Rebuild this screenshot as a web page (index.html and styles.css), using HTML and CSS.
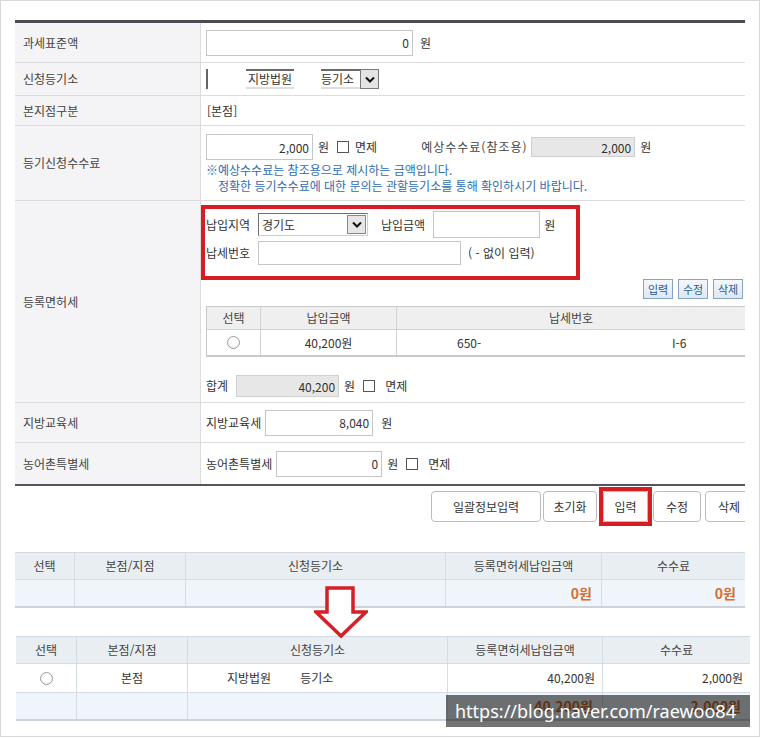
FILE: index.html
```html
<!DOCTYPE html>
<html lang="ko">
<head>
<meta charset="utf-8">
<title>등기신청 정보입력</title>
<link rel="stylesheet" href="styles.css">
</head>
<body>
<div class="frame">
  <div class="form">
    <div class="row r1">
      <div class="lbl">과세표준액</div>
      <div class="val">
        <input class="field w207" value="0" readonly><span class="ml7">원</span>
      </div>
    </div>
    <div class="row r2">
      <div class="lbl">신청등기소</div>
      <div class="val">
        <span class="bar"></span>
        <span class="seg seg1">지방법원</span>
        <span class="seg seg2">등기소</span>
        <span class="drop"><svg width="10" height="7" viewBox="0 0 10 7"><path d="M1 1.5 L5 5.5 L9 1.5" fill="none" stroke="#111" stroke-width="2"/></svg></span>
      </div>
    </div>
    <div class="row r3">
      <div class="lbl">본지점구분</div>
      <div class="val"><span class="branch">[본점]</span></div>
    </div>
    <div class="row r4">
      <div class="lbl">등기신청수수료</div>
      <div class="val col p8">
        <div class="line h26">
          <input class="field w107" value="2,000" readonly><span class="ml5">원</span><span class="chk ml8"></span><span class="ml6">면제</span><span class="est">예상수수료(참조용)</span><input class="field gray w104 h20" value="2,000" readonly><span class="ml5">원</span>
        </div>
        <p class="note">※예상수수료는 참조용으로 제시하는 금액입니다.<span class="ind">정확한 등기수수료에 대한 문의는 관할등기소를 통해 확인하시기 바랍니다.</span></p>
      </div>
    </div>
    <div class="row r5">
      <div class="lbl">등록면허세</div>
      <div class="val col p4">
        <div class="redbox">
          <div class="line h31">
            <span class="w48">납입지역</span>
            <span class="sel ml4"><span class="seltxt">경기도</span><span class="sarr"><svg width="10" height="7" viewBox="0 0 10 7"><path d="M1 1.5 L5 5.5 L9 1.5" fill="none" stroke="#111" stroke-width="2"/></svg></span></span>
            <span class="ml13">납입금액</span>
            <input class="field w107 h27 ml8" value="" readonly><span class="ml4">원</span>
          </div>
          <div class="line h26">
            <span class="w48">납세번호</span>
            <input class="field w203 h24 ml4" value="" readonly><span class="ml7">( - 없이 입력)</span>
          </div>
        </div>
        <div class="sbtns">
          <button class="sbtn">입력</button><button class="sbtn">수정</button><button class="sbtn">삭제</button>
        </div>
        <div class="ptable">
          <div class="ph">선택</div><div class="ph">납입금액</div><div class="ph">납세번호</div>
          <div class="pc"><span class="radio"></span></div><div class="pc">40,200원</div><div class="pc left"><span class="nb1">650-</span><span>I-6</span></div>
        </div>
        <div class="line h22 sumline">
          <span>합계</span><input class="field gray w103 h22 ml8" value="40,200" readonly><span class="ml5">원</span><span class="chk ml8"></span><span class="ml10">면제</span>
        </div>
      </div>
    </div>
    <div class="row r6">
      <div class="lbl">지방교육세</div>
      <div class="val">
        <span>지방교육세</span><input class="field w108 ml4" value="8,040" readonly><span class="ml8">원</span>
      </div>
    </div>
    <div class="row r7">
      <div class="lbl">농어촌특별세</div>
      <div class="val">
        <span>농어촌특별세</span><input class="field w106 ml4" value="0" readonly><span class="ml5">원</span><span class="chk ml8"></span><span class="ml10">면제</span>
      </div>
    </div>
  </div>

  <div class="actions">
    <button class="btn w110">일괄정보입력</button>
    <button class="btn w54 ml2">초기화</button>
    <span class="hlbox"><button class="btn w45 sq">입력</button></span>
    <button class="btn w48 ml1">수정</button>
    <button class="btn w48 ml4 cut">삭제</button>
  </div>

  <div class="grid t1">
    <div class="th">선택</div><div class="th">본점/지점</div><div class="th">신청등기소</div><div class="th">등록면허세납입금액</div><div class="th">수수료</div>
    <div class="td tot"></div><div class="td tot"></div><div class="td tot"></div><div class="td tot amt">0원</div><div class="td tot amt">0원</div>
  </div>

  <div class="grid t2">
    <div class="th">선택</div><div class="th">본점/지점</div><div class="th">신청등기소</div><div class="th">등록면허세납입금액</div><div class="th">수수료</div>
    <div class="td row2"><span class="radio"></span></div><div class="td row2">본점</div><div class="td row2 office"><span>지방법원</span><span class="ml29">등기소</span></div><div class="td row2 num">40,200원</div><div class="td row2 num">2,000원</div>
    <div class="td tot"></div><div class="td tot"></div><div class="td tot"></div><div class="td tot amt">40,200원</div><div class="td tot amt">2,000원</div>
  </div>
</div>

<svg class="down" width="54" height="54" viewBox="0 0 54 54"><path d="M13 2 H39 V26 H52 L27 50 L2 26 H13 Z" fill="#fff" stroke="#d42026" stroke-width="3.5" stroke-linejoin="miter"/></svg>
<div class="wm">https://blog.naver.com/raewoo84</div>
</body>
</html>
```

FILE: styles.css
```css
body {
  margin: 0;
  background: #fff;
  font-family: "Noto Sans CJK KR", "Noto Sans", sans-serif;
  font-size: 12px;
  line-height: 16px;
  color: #333;
  position: relative;
  width: 761px;
  height: 738px;
  overflow: hidden;
}

.frame {
  box-sizing: border-box;
  width: 760px;
  height: 737px;
  border: 1px solid #d8d8d8;
  padding: 19px 0 0 14px;
}

/* main form */
.form {
  width: 730px;
  border-top: 3px solid #4b4b53;
  border-bottom: 2px solid #55555b;
}
.row {
  display: flex;
  box-sizing: border-box;
  border-bottom: 1px solid #dcdcdc;
}
.row.r7 { border-bottom: 0; }
.r1 { height: 40px; }
.r2 { height: 33px; }
.r3 { height: 30px; }
.r4 { height: 75px; }
.r5 { height: 202px; }
.r6 { height: 40px; }
.r7 { height: 41px; }

.lbl {
  flex: none;
  box-sizing: border-box;
  width: 186px;
  padding-left: 8px;
  background: #f4f4f6;
  border-right: 1px solid #dcdcdc;
  display: flex;
  align-items: center;
  color: #444;
}
.val {
  flex: 1;
  min-width: 0;
  display: flex;
  align-items: center;
  padding-left: 5px;
}
.val.col {
  flex-direction: column;
  align-items: flex-start;
}
.val.p8 { padding-top: 8px; }
.val.p4 { padding: 4px 0 0 0; }

.line {
  display: flex;
  align-items: center;
  white-space: nowrap;
}
.h22 { height: 22px; }
.h26 { height: 26px; }
.h31 { height: 31px; }

.field {
  box-sizing: border-box;
  height: 26px;
  border: 1px solid #c6c6c6;
  background: #fff;
  font: 12px "Noto Sans CJK KR", "Noto Sans", sans-serif;
  color: #333;
  text-align: right;
  padding: 0 3px;
  margin: 0;
  outline: none;
}
.field.gray { background: #e7e7e7; border-color: #cfcfcf; }
.field.h20 { height: 20px; }
.field.h22 { height: 22px; }
.field.h24 { height: 24px; }
.field.h27 { height: 27px; }

.w48 { display: inline-block; width: 48px; }
.w103 { width: 103px; }
.w104 { width: 104px; }
.w106 { width: 106px; }
.w107 { width: 107px; }
.w108 { width: 108px; }
.w203 { width: 203px; }
.w207 { width: 207px; }

.ml1 { margin-left: 1px; }
.ml2 { margin-left: 2px; }
.ml4 { margin-left: 4px; }
.ml5 { margin-left: 5px; }
.ml6 { margin-left: 6px; }
.ml7 { margin-left: 7px; }
.ml8 { margin-left: 8px; }
.ml10 { margin-left: 10px; }
.ml13 { margin-left: 13px; }
.ml29 { margin-left: 29px; }

.chk {
  display: inline-block;
  box-sizing: border-box;
  width: 12px;
  height: 12px;
  border: 1px solid #555;
  background: #fff;
}

/* 신청등기소 widget */
.bar {
  display: inline-block;
  width: 2px;
  height: 20px;
  background: #666;
}
.seg {
  display: inline-block;
  box-sizing: border-box;
  height: 20px;
  border-top: 2px solid #6a6a6a;
  border-bottom: 2px solid #dedede;
  line-height: 16px;
  text-align: center;
}
.seg1 { width: 48px; margin-left: 38px; }
.seg2 { width: 39px; margin-left: 27px; text-align: left; }
.drop {
  display: inline-flex;
  align-items: center;
  justify-content: center;
  box-sizing: border-box;
  width: 19px;
  height: 20px;
  border: 1px solid #7a7a7a;
  background: #e4e4e4;
}

.branch { padding-left: 1px; }

.est {
  display: inline-block;
  width: 110px;
  margin-left: 44px;
  letter-spacing: 1px;
  color: #444;
}

.note {
  margin: 2px 0 0;
  color: #2e6cb0;
  line-height: 16px;
  white-space: nowrap;
}
.note .ind {
  display: block;
  padding-left: 12px;
}

/* red highlighted box */
.redbox {
  box-sizing: border-box;
  width: 379px;
  height: 75px;
  border: 4px solid #d71c24;
  padding-left: 1px;
}
.sel {
  box-sizing: border-box;
  display: inline-flex;
  align-items: center;
  justify-content: space-between;
  width: 110px;
  height: 23px;
  border: 1px solid;
  border-color: #6f6f6f #cfcfcf #cfcfcf #6f6f6f;
  background: #fff;
  padding: 0 1px 0 3px;
}
.sarr {
  display: inline-flex;
  align-items: center;
  justify-content: center;
  box-sizing: border-box;
  width: 19px;
  height: 19px;
  border: 1px solid #8a8a8a;
  background: #e6e6e6;
}

.sbtns {
  align-self: stretch;
  display: flex;
  justify-content: flex-end;
  gap: 5px;
  margin-top: -1px;
  padding-right: 2px;
}
.sbtn {
  box-sizing: border-box;
  width: 30px;
  height: 20px;
  padding: 0;
  border: 1px solid #87a3c3;
  background: linear-gradient(#f4f8fd, #dde8f4);
  color: #2a5c91;
  font: 11px "Noto Sans CJK KR", sans-serif;
  line-height: 18px;
}

.ptable {
  box-sizing: border-box;
  display: grid;
  grid-template-columns: 54px 136px 348px;
  width: 539px;
  margin: 7px 0 0 5px;
  border-top: 1px solid #c9c9c9;
  border-left: 1px solid #c9c9c9;
  border-bottom: 2px solid #c9c9c9;
}
.ph, .pc {
  box-sizing: border-box;
  display: flex;
  align-items: center;
  justify-content: center;
  border-right: 1px solid #d3d3d3;
}
.ph {
  height: 23px;
  background: #efefef;
  border-bottom: 1px solid #d3d3d3;
  color: #444;
}
.pc { height: 25px; }
.ph:nth-child(3), .pc:last-child { border-right: 0; }
.pc.left { justify-content: flex-start; padding-left: 60px; }
.nb1 { display: inline-block; width: 215px; }

.radio {
  display: inline-block;
  box-sizing: border-box;
  width: 13px;
  height: 13px;
  border-radius: 50%;
  border: 1px solid #9c9c9c;
  background: radial-gradient(circle at 50% 40%, #fff 40%, #ececec);
}

.sumline { margin: 18px 0 0 5px; }

/* action buttons */
.actions {
  box-sizing: border-box;
  width: 730px;
  height: 41px;
  padding-top: 5px;
  display: flex;
  justify-content: flex-end;
  align-items: flex-start;
  overflow: hidden;
}
.btn {
  box-sizing: border-box;
  flex: none;
  height: 31px;
  padding: 0;
  border: 1px solid #bcbcbc;
  border-radius: 4px;
  background: #fff;
  color: #333;
  font: 12px "Noto Sans CJK KR", sans-serif;
}
.w110 { width: 110px; }
.w54 { width: 54px; }
.w45 { width: 45px; }
.btn.w48 { width: 48px; }
.btn.sq { border-radius: 2px; }
.hlbox {
  flex: none;
  display: flex;
  margin: -4px 0 0 2px;
  border: 4px solid #d71c24;
}
.cut { margin-right: -8px; }

/* result tables */
.grid {
  display: grid;
  box-sizing: border-box;
  border-top: 1px solid #d3d9e0;
  border-bottom: 2px solid #cdd3da;
}
.t1 {
  width: 730px;
  margin-top: 25px;
  grid-template-columns: 60px 111px 260px 156px 143px;
}
.t2 {
  width: 734px;
  margin: 28px 0 0 1px;
  grid-template-columns: 61px 111px 260px 155px 147px;
}
.th, .td {
  box-sizing: border-box;
  display: flex;
  align-items: center;
  justify-content: center;
  border-right: 1px solid #d6dce3;
}
.th:nth-child(5n), .td:nth-child(5n) { border-right: 0; }
.th {
  height: 27px;
  background: #e9eef3;
  border-bottom: 1px solid #d6dce3;
  color: #444;
}
.td.row2 {
  height: 29px;
  background: #fff;
  border-bottom: 1px solid #d6dce3;
}
.td.tot {
  height: 26px;
  background: #f0f5fb;
}
.td.office { justify-content: flex-start; padding-left: 39px; }
.td.num { justify-content: flex-end; padding-right: 7px; }
.td.amt {
  justify-content: flex-end;
  padding-right: 9px;
  font-weight: bold;
  font-size: 14px;
  color: #d4702a;
}

/* overlays */
.down {
  position: absolute;
  left: 314px;
  top: 586px;
}
.wm {
  position: absolute;
  left: 446px;
  top: 695px;
  width: 304px;
  height: 32px;
  box-sizing: border-box;
  padding-left: 9px;
  background: rgba(0, 0, 0, 0.55);
  color: #fff;
  font-family: "Noto Sans", sans-serif;
  font-size: 18px;
  line-height: 32px;
  white-space: nowrap;
}
```
